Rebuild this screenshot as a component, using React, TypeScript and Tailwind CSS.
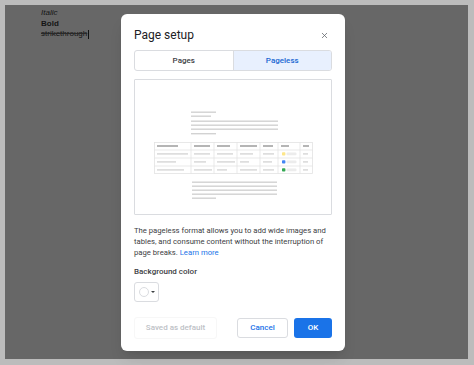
import React from 'react';
import { X } from 'lucide-react';

const cols = [19, 56, 79, 102, 125, 143, 165, 177];

// bar spans per row: [x1, x2] relative to preview inner area
const headerBars: [number, number][] = [[22, 43], [59, 75], [82, 95], [105, 122], [128, 138], [146, 154], [168, 174]];
const rowBars: [number, number][][] = [
  [[22, 53], [59, 75], [82, 98], [105, 118], [128, 139], [168, 173]],
  [[22, 41], [59, 71], [82, 100], [105, 114], [128, 137], [168, 173]],
  [[22, 49], [59, 77], [82, 92], [105, 122], [128, 139], [168, 173]],
];
const dots = ['#fde68a', '#4285f4', '#34a853'];

function PagePreview() {
  return (
    <svg width="195" height="133" viewBox="0 0 195 133">
      {/* paragraph above */}
      <rect x="56" y="31.5" width="25" height="1.4" fill="#d2d2d2" />
      <rect x="56" y="35.5" width="20" height="1.4" fill="#d2d2d2" />
      {[40.5, 44.5, 48.5].map((y) => (
        <rect key={y} x="56" y={y} width="87" height="1.4" fill="#d2d2d2" />
      ))}
      <rect x="56" y="53" width="25" height="1.4" fill="#d2d2d2" />

      {/* table */}
      <rect x="19.5" y="62.5" width="158" height="31" fill="none" stroke="#e3e3e3" strokeWidth="0.8" />
      {[70, 78, 86].map((y) => (
        <line key={y} x1="19.5" x2="177.5" y1={y} y2={y} stroke="#e3e3e3" strokeWidth="0.8" />
      ))}
      {cols.slice(1, 7).map((x) => (
        <line key={x} x1={x} x2={x} y1="62.5" y2="93.5" stroke="#e3e3e3" strokeWidth="0.8" />
      ))}
      {headerBars.map(([a, b]) => (
        <rect key={a} x={a} y="65.2" width={b - a} height="1.6" fill="#a3a3a3" />
      ))}
      {rowBars.map((row, i) =>
        row.map(([a, b]) => (
          <rect key={`${i}-${a}`} x={a} y={73.2 + i * 8} width={b - a} height="1.4" fill="#d6d6d6" />
        ))
      )}
      {dots.map((c, i) => (
        <g key={c}>
          <rect x="147" y={72.2 + i * 8} width="3.4" height="3.4" rx="0.8" fill={c} />
          <rect x="151.5" y={72.6 + i * 8} width="10" height="2.6" rx="1" fill="#ececec" />
        </g>
      ))}

      {/* paragraph below */}
      {[101.5, 105.5, 109.5, 113.5].map((y) => (
        <rect key={y} x="57" y={y} width="85" height="1.4" fill="#d2d2d2" />
      ))}
      <rect x="57" y="117.5" width="24" height="1.4" fill="#d2d2d2" />
    </svg>
  );
}

export default function App() {
  return (
    <div className="w-[474px] h-[365px] bg-[#bcbcbc] p-[5px]">
      <div className="relative w-[463px] h-[354px] bg-[#676767] font-['Liberation_Sans',Arial,sans-serif]">
        {/* document text behind scrim */}
        <div className="pl-[36px] pt-[3px] text-[8px] leading-[10.5px] text-[#141414]">
          <p className="italic">Italic</p>
          <p className="font-bold">Bold</p>
          <p className="flex items-center">
            <span className="line-through decoration-[#2a2a2a]">strikethrough</span>
            <span className="w-px h-[9px] bg-[#111] ml-px" />
          </p>
        </div>

        {/* Page setup dialog */}
        <div className="absolute left-[116px] top-[9px] w-[224px] h-[337px] bg-white rounded-[6px] shadow-lg px-[13px] pt-[12px] pb-[13px] flex flex-col font-['Roboto',sans-serif]">
          <div className="flex items-center justify-between h-[18px] pr-[3px]">
            <h2 className="text-[12px] text-[#202124]">Page setup</h2>
            <X size={9} strokeWidth={2} className="text-[#5f6368]" />
          </div>

          <div className="mt-[6px] flex h-[21px] border border-[#dadce0] rounded-[3px] overflow-hidden text-[8px] font-medium">
            <div className="flex-1 flex items-center justify-center text-[#3c4043]">Pages</div>
            <div className="flex-1 flex items-center justify-center bg-[#e8f0fe] text-[#1967d2] border-l border-[#dadce0]">
              Pageless
            </div>
          </div>

          <div className="mt-[8px] h-[136px] border border-[#dadce0] rounded-[1px]">
            <PagePreview />
          </div>

          <p className="mt-[11px] text-[7.7px] leading-[10.8px] text-[#3c4043]">
            The pageless format allows you to add wide images and tables, and consume content without the interruption of page breaks.{' '}
            <span className="text-[#1a73e8]">Learn more</span>
          </p>

          <p className="mt-[8px] text-[8px] font-medium text-[#3c4043]">Background color</p>

          <div className="mt-[4px] w-[25px] h-[20px] border border-[#dadce0] rounded-[3px] flex items-center pl-[4px] gap-[2px]">
            <span className="w-[10px] h-[10px] rounded-full border border-[#dadce0] bg-white" />
            <span className="w-0 h-0 border-l-[2px] border-r-[2px] border-t-[2.5px] border-l-transparent border-r-transparent border-t-[#3c4043]" />
          </div>

          <div className="mt-auto flex items-center h-[20px]">
            <div className="w-[83px] h-[22px] border border-[#f7f7f7] rounded-[3px] flex items-center justify-center text-[8px] text-[#bdc1c6] font-medium">
              Saved as default
            </div>
            <div className="ml-auto w-[51px] h-[20px] border border-[#dadce0] rounded-[3px] flex items-center justify-center text-[8px] text-[#1a73e8] font-medium">
              Cancel
            </div>
            <div className="ml-[6px] w-[38px] h-[20px] bg-[#1a73e8] rounded-[3px] flex items-center justify-center text-[8px] text-white font-medium">
              OK
            </div>
          </div>
        </div>
      </div>
    </div>
  );
}
